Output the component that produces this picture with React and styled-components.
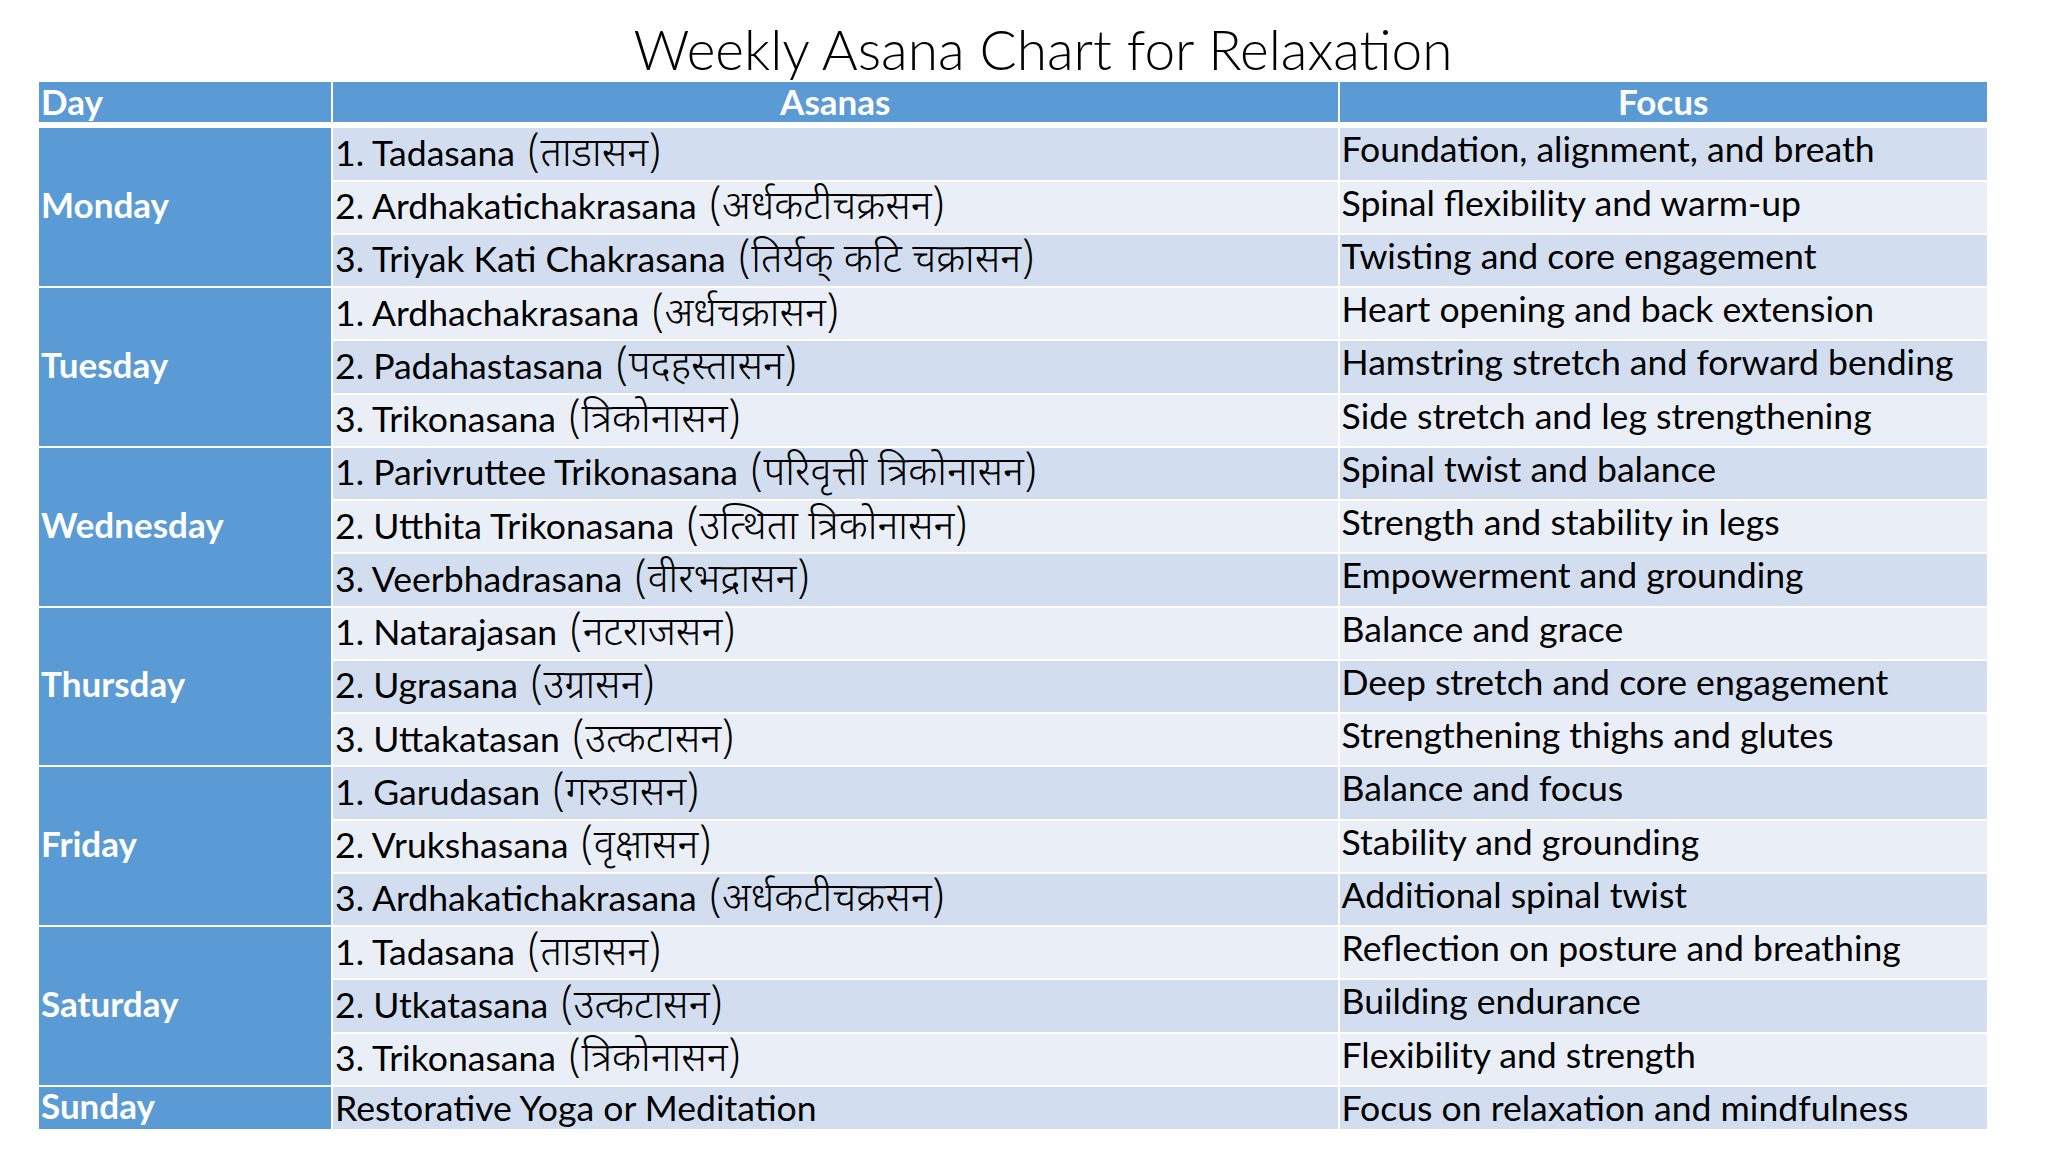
import React from "react";
import styled, {createGlobalStyle} from "styled-components";

const GlobalStyle = createGlobalStyle`
	html, body {
		margin: 0;
		padding: 0;
		background: #ffffff;
	}
	body {
		font-family: Lato, "Noto Sans", "Noto Sans Devanagari", sans-serif;
		color: #000000;
	}
`;

const Page = styled.div`
	width: 2048px;
	height: 1152px;
	display: flex;
	flex-direction: column;
	padding: 0 61px 0 39px;
	box-sizing: border-box;
`;

const TitleBar = styled.div`
	display: flex;
	justify-content: center;
	padding-left: 60px;
	height: 81.7px;
`;

const Title = styled.h1`
	margin: 0;
	font-family: Lato, "Noto Sans", sans-serif;
	font-weight: 300;
	font-size: 55px;
	line-height: 1;
	padding-top: 22px;
	height: 59px;
	white-space: nowrap;
`;

const Table = styled.div`
	display: grid;
	grid-template-columns: 292px 1004.5px 647.5px;
	grid-template-rows: 44.6px repeat(18, 51.25px) 42.3px;
	column-gap: 2px;
	row-gap: 2px;
	font-size: 35.6px;
`;

const HeaderCell = styled.div`
	background: #5b9bd5;
	color: #ffffff;
	font-weight: 700;
	font-size: 35px;
	margin-bottom: 4px;
	display: flex;
	align-items: center;
	justify-content: ${(p) => (p.$center ? "center" : "flex-start")};
	padding: 0 2px 2px;
	white-space: nowrap;
`;

const DayCell = styled.div`
	grid-row: span ${(p) => p.$span};
	background: #5b9bd5;
	color: #ffffff;
	font-weight: 700;
	font-size: 35px;
	display: flex;
	align-items: center;
	padding: 0 2px 6px;
	white-space: nowrap;
`;

const BodyCell = styled.div`
	background: ${(p) => (p.$odd ? "#eaeff7" : "#d2deef")};
	padding: ${(p) => (p.$hindi ? "3.5px 2px 0" : "0 2px")};
	white-space: nowrap;
	line-height: 1.2;
	display: flex;
	align-items: ${(p) => (p.$middle ? "center" : "flex-start")};
`;

const Deva = styled.span`
	font-family: "Noto Sans Devanagari", Lato, sans-serif;
	font-size: 1.12em;
	font-weight: 300;
	line-height: 1;
	margin-left: 0.3em;
`;

const schedule = [
	{
		day: "Monday",
		rows: [
			["1. Tadasana", "ताडासन", "Foundation, alignment, and breath"],
			["2. Ardhakatichakrasana", "अर्धकटीचक्रसन", "Spinal flexibility and warm-up"],
			["3. Triyak Kati Chakrasana", "तिर्यक् कटि चक्रासन", "Twisting and core engagement"],
		],
	},
	{
		day: "Tuesday",
		rows: [
			["1. Ardhachakrasana", "अर्धचक्रासन", "Heart opening and back extension"],
			["2. Padahastasana", "पदहस्तासन", "Hamstring stretch and forward bending"],
			["3. Trikonasana", "त्रिकोनासन", "Side stretch and leg strengthening"],
		],
	},
	{
		day: "Wednesday",
		rows: [
			["1. Parivruttee Trikonasana", "परिवृत्ती त्रिकोनासन", "Spinal twist and balance"],
			["2. Utthita Trikonasana", "उत्थिता त्रिकोनासन", "Strength and stability in legs"],
			["3. Veerbhadrasana", "वीरभद्रासन", "Empowerment and grounding"],
		],
	},
	{
		day: "Thursday",
		rows: [
			["1. Natarajasan", "नटराजसन", "Balance and grace"],
			["2. Ugrasana", "उग्रासन", "Deep stretch and core engagement"],
			["3. Uttakatasan", "उत्कटासन", "Strengthening thighs and glutes"],
		],
	},
	{
		day: "Friday",
		rows: [
			["1. Garudasan", "गरुडासन", "Balance and focus"],
			["2. Vrukshasana", "वृक्षासन", "Stability and grounding"],
			["3. Ardhakatichakrasana", "अर्धकटीचक्रसन", "Additional spinal twist"],
		],
	},
	{
		day: "Saturday",
		rows: [
			["1. Tadasana", "ताडासन", "Reflection on posture and breathing"],
			["2. Utkatasana", "उत्कटासन", "Building endurance"],
			["3. Trikonasana", "त्रिकोनासन", "Flexibility and strength"],
		],
	},
	{
		day: "Sunday",
		rows: [["Restorative Yoga or Meditation", null, "Focus on relaxation and mindfulness"]],
	},
];

export default function App() {
	let index = 0;
	return (
		<>
			<GlobalStyle />
			<Page>
				<TitleBar>
					<Title>Weekly Asana Chart for Relaxation</Title>
				</TitleBar>
				<Table>
					<HeaderCell>Day</HeaderCell>
					<HeaderCell $center>Asanas</HeaderCell>
					<HeaderCell $center>Focus</HeaderCell>
					{schedule.map((item) => (
						<React.Fragment key={item.day}>
							<DayCell $span={item.rows.length}>{item.day}</DayCell>
							{item.rows.map(([name, deva, focus]) => {
								const odd = index++ % 2 === 1;
								return (
									<React.Fragment key={name + index}>
										<BodyCell $odd={odd} $hindi={!!deva} $middle={!deva}>
											<span>
												{name}
												{deva && <Deva>({deva})</Deva>}
											</span>
										</BodyCell>
										<BodyCell $odd={odd} $middle={!deva}>
											{focus}
										</BodyCell>
									</React.Fragment>
								);
							})}
						</React.Fragment>
					))}
				</Table>
			</Page>
		</>
	);
}
